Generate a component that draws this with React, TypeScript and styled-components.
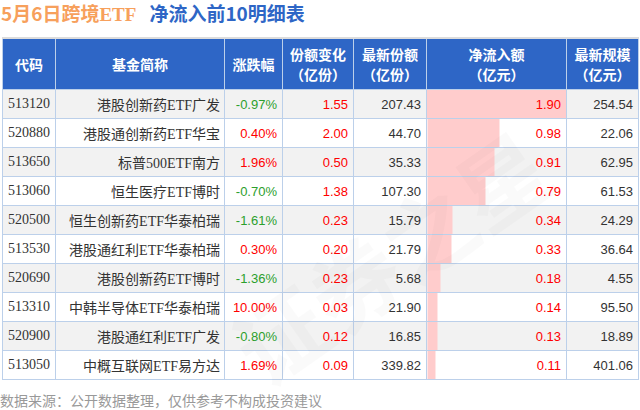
import styled, { createGlobalStyle } from "styled-components";

type Row = {
	code: string;
	name: string;
	pct: number;
	shareChg: number;
	shares: string;
	inflow: number;
	scale: string;
};

const rows: Row[] = [
	{ code: "513120", name: "港股创新药ETF广发", pct: -0.97, shareChg: 1.55, shares: "207.43", inflow: 1.9, scale: "254.54" },
	{ code: "520880", name: "港股通创新药ETF华宝", pct: 0.4, shareChg: 2.0, shares: "44.70", inflow: 0.98, scale: "22.06" },
	{ code: "513650", name: "标普500ETF南方", pct: 1.96, shareChg: 0.5, shares: "35.33", inflow: 0.91, scale: "62.95" },
	{ code: "513060", name: "恒生医疗ETF博时", pct: -0.7, shareChg: 1.38, shares: "107.30", inflow: 0.79, scale: "61.53" },
	{ code: "520500", name: "恒生创新药ETF华泰柏瑞", pct: -1.61, shareChg: 0.23, shares: "15.79", inflow: 0.34, scale: "24.29" },
	{ code: "513530", name: "港股通红利ETF华泰柏瑞", pct: 0.3, shareChg: 0.2, shares: "21.79", inflow: 0.33, scale: "36.64" },
	{ code: "520690", name: "港股创新药ETF博时", pct: -1.36, shareChg: 0.23, shares: "5.68", inflow: 0.18, scale: "4.55" },
	{ code: "513310", name: "中韩半导体ETF华泰柏瑞", pct: 10.0, shareChg: 0.03, shares: "21.90", inflow: 0.14, scale: "95.50" },
	{ code: "520900", name: "港股通红利ETF广发", pct: -0.8, shareChg: 0.12, shares: "16.85", inflow: 0.13, scale: "18.89" },
	{ code: "513050", name: "中概互联网ETF易方达", pct: 1.69, shareChg: 0.09, shares: "339.82", inflow: 0.11, scale: "401.06" },
];

const maxInflow = Math.max(...rows.map((r) => r.inflow));

// split "ETF" out so it gets the serif face like the source chart
function renderName(name: string) {
	const parts = name.split(/(ETF|500)/);
	return parts.map((p, i) =>
		p === "ETF" || p === "500" ? <Latin key={i}>{p}</Latin> : <span key={i}>{p}</span>
	);
}

export default function App() {
	return (
		<Page>
			<GlobalStyle />
			<Title>
				<Orange>
					5月6日跨境<Latin>ETF</Latin>
				</Orange>
				<Blue>净流入前10明细表</Blue>
			</Title>
			<Table>
				<colgroup>
					<col style={{ width: 53 }} />
					<col style={{ width: 169 }} />
					<col style={{ width: 58 }} />
					<col style={{ width: 71 }} />
					<col style={{ width: 73 }} />
					<col style={{ width: 140 }} />
					<col style={{ width: 72 }} />
				</colgroup>
				<thead>
					<tr>
						<Th>代码</Th>
						<Th>基金简称</Th>
						<Th>涨跌幅</Th>
						<Th><HeadLine>份额变化</HeadLine><HeadLine>（亿份）</HeadLine></Th>
						<Th><HeadLine>最新份额</HeadLine><HeadLine>（亿份）</HeadLine></Th>
						<Th><HeadLine>净流入额</HeadLine><HeadLine>（亿元）</HeadLine></Th>
						<Th><HeadLine>最新规模</HeadLine><HeadLine>（亿元）</HeadLine></Th>
					</tr>
				</thead>
				<tbody>
					{rows.map((r, i) => {
						const barW = Math.round((r.inflow / maxInflow) * 139);
						return (
							<Tr key={r.code} $striped={i % 2 === 0}>
								<CodeCell>{r.code}</CodeCell>
								<NameCell>{renderName(r.name)}</NameCell>
								<Td $color={r.pct < 0 ? "#2ca02c" : "#ff0000"}>{r.pct.toFixed(2)}%</Td>
								<Td $color="#ff0000">{r.shareChg.toFixed(2)}</Td>
								<Td>{r.shares}</Td>
								<Td
									$color="#ff0000"
									style={{
										background: `linear-gradient(to right, #ffcccc ${barW}px, transparent ${barW}px)`,
									}}
								>
									{r.inflow.toFixed(2)}
								</Td>
								<Td>{r.scale}</Td>
							</Tr>
						);
					})}
				</tbody>
			</Table>
			<Footer>数据来源：公开数据整理，仅供参考不构成投资建议</Footer>
			<Watermark>证券之星</Watermark>
		</Page>
	);
}

const GlobalStyle = createGlobalStyle`
	html, body {
		margin: 0;
		padding: 0;
		background: #ffffff;
	}
	body {
		font-family: "Noto Sans CJK SC", "Liberation Sans", sans-serif;
	}
`;

const Page = styled.div`
	position: relative;
	width: 640px;
	height: 410px;
	overflow: hidden;
`;

const Title = styled.div`
	height: 37px;
	display: flex;
	align-items: flex-start;
	gap: 13px;
	padding-left: 1px;
	font-size: 19px;
	font-weight: bold;
	line-height: 26px;
`;

const Orange = styled.span`
	color: #f7a05c;
`;

const Blue = styled.span`
	color: #2e66c6;
`;

const Latin = styled.span`
	font-family: "Liberation Serif", serif;
`;

const Table = styled.table`
	margin-left: 2px;
	width: 636px;
	table-layout: fixed;
	border-collapse: collapse;
	border-top: 2px solid #dcdcdc;
`;

const Th = styled.th`
	height: 50px;
	padding: 0;
	background: #2e66c6;
	color: #ffffff;
	font-size: 14px;
	font-weight: bold;
	line-height: 18px;
	text-align: center;
	border: 1px solid #bcd0ea;
	border-top: none;
`;

const HeadLine = styled.div`
	height: 20px;
	line-height: 20px;
	white-space: nowrap;
`;

const Tr = styled.tr<{ $striped: boolean }>`
	background: ${(p) => (p.$striped ? "#f2f2f2" : "#ffffff")};
`;

const Td = styled.td<{ $color?: string }>`
	height: 28px;
	padding: 0 5px 0 0;
	border: 1px solid #bcd0ea;
	text-align: right;
	font-family: "Liberation Sans", sans-serif;
	font-size: 13px;
	color: ${(p) => p.$color ?? "#333333"};
	white-space: nowrap;
`;

const CodeCell = styled(Td)`
	padding: 0;
	text-align: center;
	font-family: "Liberation Serif", serif;
	font-size: 14px;
`;

const NameCell = styled(Td)`
	padding-right: 4px;
	font-family: "Noto Sans CJK SC", sans-serif;
	font-size: 14px;
`;

const Footer = styled.div`
	margin-top: 10px;
	font-size: 14px;
	color: #999999;
	line-height: 20px;
`;

const Watermark = styled.div`
	position: absolute;
	left: 210px;
	top: 190px;
	font-size: 90px;
	font-weight: bold;
	color: rgba(0, 0, 0, 0.02);
	transform: rotate(-35deg);
	white-space: nowrap;
	pointer-events: none;
`;
